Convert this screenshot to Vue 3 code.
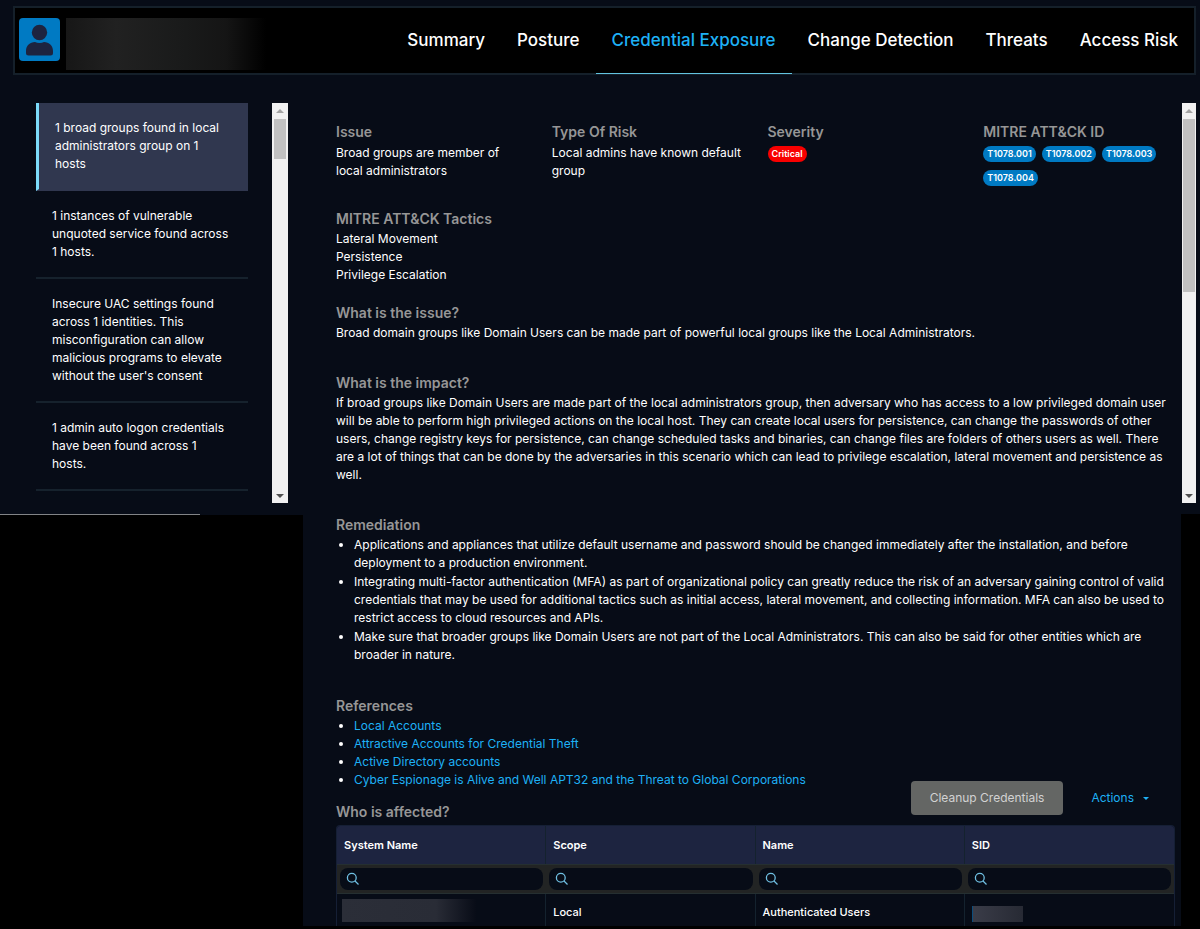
<template>
  <div class="page">
    <header class="top">
      <div class="top-bar">
        <span class="avatar">
          <svg viewBox="0 0 41 43" width="41" height="43" aria-hidden="true">
            <circle cx="20.500" cy="14.500" r="7.700" />
            <path d="M7 35V33C7 27.500 11 24 16 24C18.500 25.200 22.500 25.200 25 24C30 24 34 27.500 34 33V35Q34 37.500 31.500 37.500H9.500Q7 37.500 7 35Z" />
          </svg>
        </span>
        <span class="masked-title"></span>
        <nav class="tabs">
          <a
            v-for="tab in tabs"
            :key="tab"
            href="#"
            :class="['tab', { active: tab === activeTab }]"
            @click.prevent="activeTab = tab"
          >{{ tab }}</a>
        </nav>
      </div>
    </header>

    <div class="body">
      <aside class="side">
        <div class="side-inner">
          <div class="issue-list">
            <button
              v-for="(issue, i) in issues"
              :key="i"
              :class="['issue', { active: i === activeIssue }]"
              @click="activeIssue = i"
            >{{ issue }}</button>
          </div>
          <div class="track">
            <span class="arrow up"></span>
            <span class="thumb"></span>
            <span class="arrow down"></span>
          </div>
        </div>
      </aside>

      <main class="details">
        <div class="facts">
          <div>
            <h2 class="label">Issue</h2>
            <p>Broad groups are member of local administrators</p>
          </div>
          <div>
            <h2 class="label">Type Of Risk</h2>
            <p>Local admins have known default group</p>
          </div>
          <div>
            <h2 class="label">Severity</h2>
            <div class="badges"><span class="badge critical">Critical</span></div>
          </div>
          <div>
            <h2 class="label">MITRE ATT&amp;CK ID</h2>
            <div class="badges">
              <span v-for="id in mitreIds" :key="id" class="badge">{{ id }}</span>
            </div>
          </div>
        </div>

        <section class="section tactics">
          <h2 class="label">MITRE ATT&amp;CK Tactics</h2>
          <p v-for="t in tactics" :key="t">{{ t }}</p>
        </section>

        <section class="section">
          <h2 class="label">What is the issue?</h2>
          <p>Broad domain groups like Domain Users can be made part of powerful local groups like the Local Administrators.</p>
        </section>

        <section class="section">
          <h2 class="label">What is the impact?</h2>
          <p>If broad groups like Domain Users are made part of the local administrators group, then adversary who has access to a low privileged domain user will be able to perform high privileged actions on the local host. They can create local users for persistence, can change the passwords of other users, change registry keys for persistence, can change scheduled tasks and binaries, can change files are folders of others users as well. There are a lot of things that can be done by the adversaries in this scenario which can lead to privilege escalation, lateral movement and persistence as well.</p>
        </section>

        <section class="section">
          <h2 class="label">Remediation</h2>
          <ul class="bullets spaced">
            <li v-for="r in remediation" :key="r">{{ r }}</li>
          </ul>
        </section>

        <div class="refs-row">
          <div class="refs">
            <h2 class="label">References</h2>
            <ul class="bullets">
              <li v-for="r in references" :key="r"><a href="#" class="link">{{ r }}</a></li>
            </ul>
            <h2 class="label affected">Who is affected?</h2>
          </div>
          <div class="actions">
            <button class="cleanup">Cleanup Credentials</button>
            <button class="menu">Actions <span class="caret"></span></button>
          </div>
        </div>

        <table class="grid">
          <thead>
            <tr>
              <th v-for="c in columns" :key="c">{{ c }}</th>
            </tr>
            <tr class="filters">
              <td v-for="c in columns" :key="c">
                <label class="filter">
                  <svg viewBox="0 0 14 14" width="14" height="14" aria-hidden="true">
                    <circle cx="5.800" cy="5.800" r="4.400" />
                    <path d="M9 9L12.500 12.500" />
                  </svg>
                  <input v-model="filters[c]" type="text" :aria-label="c" />
                </label>
              </td>
            </tr>
          </thead>
          <tbody>
            <tr>
              <td><span class="mask mask-name"></span></td>
              <td>Local</td>
              <td>Authenticated Users</td>
              <td><span class="mask mask-sid"></span></td>
            </tr>
          </tbody>
        </table>
      </main>

      <div class="rail">
        <div class="track">
          <span class="arrow up"></span>
          <span class="thumb long"></span>
          <span class="arrow down"></span>
        </div>
      </div>
    </div>
  </div>
</template>

<script setup>
import { ref, reactive } from 'vue'

const tabs = ['Summary', 'Posture', 'Credential Exposure', 'Change Detection', 'Threats', 'Access Risk']
const activeTab = ref('Credential Exposure')

const issues = [
  '1 broad groups found in local administrators group on 1 hosts',
  '1 instances of vulnerable unquoted service found across 1 hosts.',
  "Insecure UAC settings found across 1 identities. This misconfiguration can allow malicious programs to elevate without the user's consent",
  '1 admin auto logon credentials have been found across 1 hosts.'
]
const activeIssue = ref(0)

const mitreIds = ['T1078.001', 'T1078.002', 'T1078.003', 'T1078.004']
const tactics = ['Lateral Movement', 'Persistence', 'Privilege Escalation']

const remediation = [
  'Applications and appliances that utilize default username and password should be changed immediately after the installation, and before deployment to a production environment.',
  'Integrating multi-factor authentication (MFA) as part of organizational policy can greatly reduce the risk of an adversary gaining control of valid credentials that may be used for additional tactics such as initial access, lateral movement, and collecting information. MFA can also be used to restrict access to cloud resources and APIs.',
  'Make sure that broader groups like Domain Users are not part of the Local Administrators. This can also be said for other entities which are broader in nature.'
]

const references = [
  'Local Accounts',
  'Attractive Accounts for Credential Theft',
  'Active Directory accounts',
  'Cyber Espionage is Alive and Well APT32 and the Threat to Global Corporations'
]

const columns = ['System Name', 'Scope', 'Name', 'SID']
const filters = reactive({})
</script>

<style>
body { margin: 0; background: #000; }
</style>

<style scoped>
* { box-sizing: border-box; }
.page { min-height: 100vh; background: #000; color: #fff; font-family: Inter, "Liberation Sans", sans-serif; font-size: 12px; line-height: 18px; }
button { font: inherit; cursor: pointer; }
p, h2, ul { margin: 0; }

.top { background: #070c17; padding: 6px 4px 28px 13px; }
.top-bar { display: flex; height: 69px; border: 2px solid #15202a; background: #000; }
.avatar { width: 41px; height: 43px; margin: 10px 0 0 4px; border-radius: 4px; background: #007ac3; flex-shrink: 0; }
.avatar svg { display: block; fill: #1d2440; }
.masked-title { width: 200px; height: 52px; margin: 10px 0 0 6px; background: linear-gradient(90deg, #171717, #212121 25%, #191a1a 60%, #151515 80%, #000); }
.tabs { display: flex; margin-left: auto; margin-bottom: -1px; }
.tab { display: flex; align-items: center; padding: 0 16px 2px; color: #fff; font-size: 17px; font-weight: 500; text-decoration: none; white-space: nowrap; border-bottom: 1px solid transparent; }
.tab.active { color: #1eb1f6; border-bottom-color: #62c3e0; }

.body { display: flex; align-items: flex-start; }
.side { width: 303px; flex-shrink: 0; background: #070c17; }
.side-inner { display: flex; padding: 0 15px 11px 36px; justify-content: space-between; }
.side::after { content: ""; display: block; width: 200px; height: 1px; background: #828487; }
.issue-list { width: 212px; }
.issue { display: block; width: 100%; padding: 16px; border: 0; border-bottom: 2px solid #16222d; background: none; color: #fff; text-align: left; }
.issue.active { background: #30374f; border-left: 3px solid #7cdcfb; border-bottom-color: #30374f; }

.track { display: flex; flex-direction: column; align-items: center; width: 16px; height: 400px; background: #f1f1f1; }
.arrow { border: 4px solid transparent; }
.arrow.up { margin: 2px 0 6px; border-bottom-color: #a3a3a3; }
.arrow.down { margin: auto 0 1px; border-top-color: #505050; }
.thumb { width: 12px; height: 40px; background: #c1c1c1; }
.thumb.long { height: 173px; }
.rail { width: 19px; height: 411px; flex-shrink: 0; padding-left: 1px; background: #070c17; }
.rail .track { width: 14px; }

.details { flex: 1; min-width: 0; padding: 19px 6px 0 33px; background: #070c17; }
.label { color: #969696; font-size: 14px; font-weight: 600; line-height: 20px; margin-bottom: 1px; }
.facts { display: grid; grid-template-columns: repeat(4, 1fr); gap: 24px; padding-bottom: 23px; }
.facts .label { margin-bottom: 2px; }
.badges { display: flex; flex-wrap: wrap; gap: 8px 6px; padding-top: 2px; }
.badge { padding: 0 4px; border-radius: 8px; background: #007ac3; color: #fff; font-size: 9px; font-weight: 600; line-height: 16px; }
.badge.critical { background: #f80000; }
.section { padding-bottom: 31px; }
.section.tactics { padding-bottom: 19px; }
.bullets { padding-left: 18px; }
.bullets.spaced li { margin-bottom: 1px; }
.link { color: #1eb1f6; text-decoration: none; }

.refs-row { display: flex; justify-content: space-between; }
.affected { margin: 13px 0 3px; }
.actions { display: flex; align-items: center; align-self: flex-end; gap: 22px; padding: 0 20px 10px 0; }
.cleanup { height: 34px; padding: 0 19px; border: 0; border-radius: 4px; background: #646664; color: #d2d2d2; }
.menu { display: flex; align-items: center; gap: 9px; padding: 0 6px; border: 0; background: none; color: #1eb1f6; }
.caret { border: 3px solid transparent; border-top-color: #1eb1f6; margin-top: 3px; }

.grid { width: 100%; table-layout: fixed; border-collapse: separate; border-spacing: 0; border: 1px solid #151f35; border-bottom: 0; border-radius: 4px 4px 0 0; overflow: hidden; }
.grid th, .grid td { text-align: left; border-right: 1px solid #14222e; font-size: 11px; font-weight: 500; }
.grid th:last-child, .grid td:last-child { border-right: 0; }
.grid th { height: 38px; padding: 0 7px; background: #1d2440; color: #fff; font-weight: 600; }
.grid .filters td { padding: 3px; background: #222424; border-right: 0; border-top: 1px solid #252f31; border-bottom: 1px solid #252f31; }
.filter { display: flex; align-items: center; gap: 4px; height: 22px; padding: 0 6px; border-radius: 8px; background: #070c17; }
.filter svg { flex-shrink: 0; fill: none; stroke: #6fbfe2; stroke-width: 1.3; }
.filter input { flex: 1; min-width: 0; border: 0; outline: 0; background: none; color: #fff; font: inherit; }
.grid tbody td { height: 32px; padding: 3px 7px 0; }
.mask { display: block; }
.mask-name { width: 134px; height: 23px; margin: 0 0 3px -2px; background: linear-gradient(90deg, #2b2e38, #292c36 70%, #080c17); }
.mask-sid { width: 51px; height: 16px; margin-top: 4px; background: linear-gradient(90deg, #3a3c48, #272a34); border-left: 1px solid #0c4d7c; }
</style>
